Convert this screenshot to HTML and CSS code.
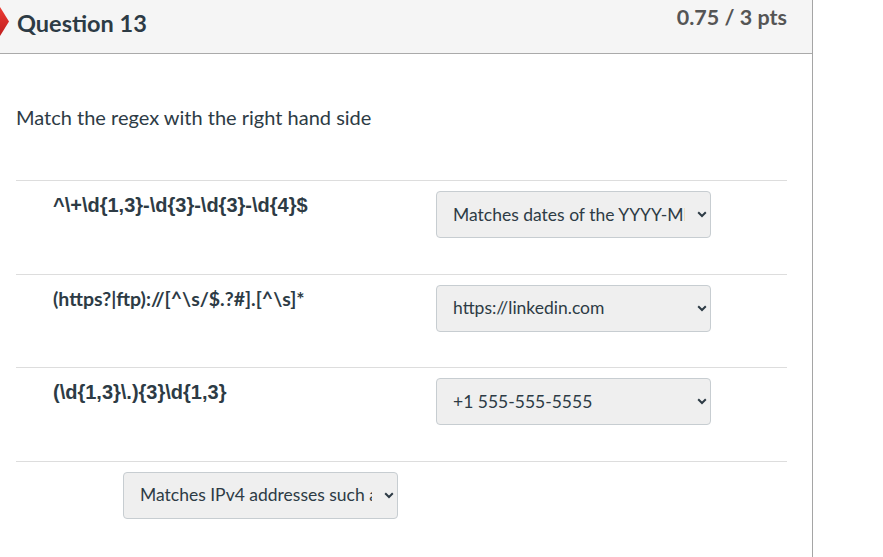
FILE: index.html
```html
<!DOCTYPE html>
<html lang="en">
<head>
<meta charset="utf-8">
<title>Question 13</title>
<link rel="stylesheet" href="styles.css">
</head>
<body>
<div class="question">
  <span class="flag"></span>
  <div class="header">
    <h2 class="qname">Question 13</h2>
    <div class="pts">0.75 / 3 pts</div>
  </div>
  <div class="content">
    <p class="qtext">Match the regex with the right hand side</p>
    <div class="row">
      <div class="label arial">^\+\d{1,3}-\d{3}-\d{3}-\d{4}$</div>
      <div class="select-wrap">
        <select class="answer"><option>Matches dates of the YYYY-MM-DD format</option></select>
        <svg class="chev" width="10" height="7" viewBox="0 0 10 7"><path d="M1.2 1.3 L5 5 L8.8 1.3" fill="none" stroke="#2d3b45" stroke-width="2"/></svg>
      </div>
    </div>
    <div class="row">
      <div class="label lato">(https?|ftp)://[^\s/$.?#].[^\s]*</div>
      <div class="select-wrap">
        <select class="answer"><option>https://linkedin.com</option></select>
        <svg class="chev" width="10" height="7" viewBox="0 0 10 7"><path d="M1.2 1.3 L5 5 L8.8 1.3" fill="none" stroke="#2d3b45" stroke-width="2"/></svg>
      </div>
    </div>
    <div class="row">
      <div class="label arial">(\d{1,3}\.){3}\d{1,3}</div>
      <div class="select-wrap">
        <select class="answer"><option>+1 555-555-5555</option></select>
        <svg class="chev" width="10" height="7" viewBox="0 0 10 7"><path d="M1.2 1.3 L5 5 L8.8 1.3" fill="none" stroke="#2d3b45" stroke-width="2"/></svg>
      </div>
    </div>
    <div class="row row-last">
      <div class="select-wrap">
        <select class="answer"><option>Matches IPv4 addresses such as 192.168.0.1</option></select>
        <svg class="chev" width="10" height="7" viewBox="0 0 10 7"><path d="M1.2 1.3 L5 5 L8.8 1.3" fill="none" stroke="#2d3b45" stroke-width="2"/></svg>
      </div>
    </div>
  </div>
</div>
</body>
</html>
```

FILE: styles.css
```css
html, body {
  margin: 0;
  padding: 0;
  background: #ffffff;
  overflow: hidden;
}

body {
  font-family: Lato, "Open Sans", sans-serif;
  color: #2d3b45;
}

.question {
  position: relative;
  width: 813px;
  height: 557px;
  box-sizing: border-box;
  border-right: 1px solid #a5a5a5;
}

.flag {
  position: absolute;
  left: 0;
  top: 7px;
  width: 9px;
  height: 29px;
  background: linear-gradient(180deg, #ec3a33, #c01e1e);
  clip-path: polygon(0 0, 100% 50%, 0 100%);
}

.header {
  display: flex;
  justify-content: space-between;
  align-items: flex-start;
  height: 54px;
  box-sizing: border-box;
  background: #f5f5f5;
  border-bottom: 1px solid #aaaaaa;
  padding: 0 25px 0 17px;
}

.qname {
  margin: 9px 0 0;
  font-size: 23.5px;
  line-height: 28px;
  font-weight: 700;
  color: #2d3b45;
}

.pts {
  margin-top: 4px;
  font-size: 21.5px;
  line-height: 26px;
  font-weight: 700;
  color: #555555;
}

.content {
  padding: 0 25px 0 16px;
}

.qtext {
  margin: 51px 0;
  font-size: 20px;
  line-height: 24px;
}

.row {
  display: flex;
  align-items: flex-start;
  height: 93.67px;
  box-sizing: border-box;
  border-top: 1px solid #dddddd;
  padding-top: 10px;
}

.label {
  width: 420px;
  box-sizing: border-box;
  padding: 2px 0 0 37px;
  font-weight: 700;
  font-size: 20px;
  line-height: 24px;
}

.arial {
  font-family: "Liberation Sans", Arial, sans-serif;
}

.lato {
  font-family: Lato, sans-serif;
  font-size: 19.5px;
}

.select-wrap {
  position: relative;
  width: 275px;
  height: 47px;
}

.answer {
  appearance: none;
  -webkit-appearance: none;
  display: block;
  width: 100%;
  height: 100%;
  box-sizing: border-box;
  padding: 0 25px 1px 16px;
  background-color: #efefef;
  border: 1px solid #c7cdd1;
  border-radius: 4px;
  font-family: Lato, sans-serif;
  font-size: 17.5px;
  color: #2d3b45;
}

.chev {
  position: absolute;
  right: 4px;
  top: 20px;
  pointer-events: none;
}

.row-last .select-wrap {
  margin-left: 107px;
}
```
